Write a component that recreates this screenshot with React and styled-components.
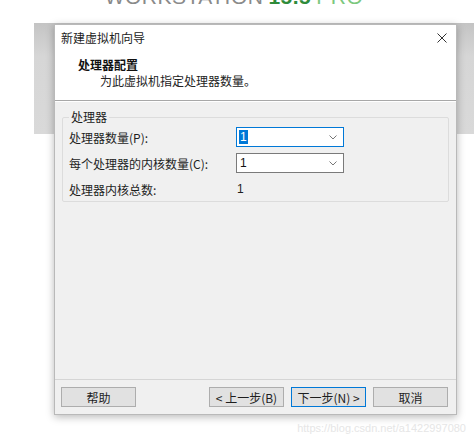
import styled, { createGlobalStyle } from 'styled-components'

const Global = createGlobalStyle`
  html, body { margin: 0; padding: 0; background: #fff; }
  body { font-family: "Noto Sans CJK SC", "Microsoft YaHei", sans-serif; font-size: 12px; color: #1e1e1e; }
`

const Page = styled.div`
  position: relative;
  width: 474px;
  height: 440px;
  overflow: hidden;
  background: #fff;
`

const Banner = styled.div`
  height: 5px;
  overflow: hidden;
  display: flex;
  justify-content: center;
  align-items: flex-end;
  padding-right: 6px;
  font-family: "Liberation Sans", Arial, sans-serif;
  font-size: 21px;
  letter-spacing: 0.5px;
  line-height: 16px;
  color: #8a8a8a;
  white-space: nowrap;
`

const Brand = styled.span`
  color: ${p => p.$c};
  font-weight: ${p => (p.$bold ? 700 : 400)};
  margin-left: ${p => p.$gap || 0}px;
`

const Backdrop = styled.div`
  position: absolute;
  left: 34px;
  top: 23px;
  right: 0;
  height: 111px;
  background: linear-gradient(#c4c4c4, #d6d6d6 30%, #d9d9d9);
`

const Dialog = styled.div`
  position: relative;
  margin: 19px 0 0 54px;
  width: 403px;
  height: 391px;
  display: flex;
  flex-direction: column;
  background: #f0f0f0;
  border: 1px solid #b9b9b9;
  box-sizing: border-box;
  box-shadow: 0 2px 8px rgba(0, 0, 0, 0.28);
`

const TitleBar = styled.div`
  height: 25px;
  display: flex;
  align-items: center;
  justify-content: space-between;
  padding: 0 9px 0 6px;
  background: #fff;
`

const Title = styled.span`
  font-size: 12px;
  color: #222;
`

const Header = styled.div`
  height: 51px;
  background: #fff;
  padding: 7px 0 0 23px;
  box-sizing: border-box;
  border-bottom: 1px solid #a8a8a8;
`

const HeadTitle = styled.div`
  font-weight: 700;
  font-size: 12px;
  line-height: 16px;
  color: #111;
`

const HeadSub = styled.div`
  font-size: 12px;
  line-height: 16px;
  padding-left: 22px;
  color: #222;
`

const Body = styled.div`
  flex: 1;
  padding: 8px 7px 0 7px;
  border-top: 1px solid #fff;
`

const Group = styled.fieldset`
  margin: 0;
  padding: 0 0 6px 6px;
  height: 92px;
  box-sizing: border-box;
  border: 1px solid #dcdcdc;
  border-radius: 2px;
`

const Legend = styled.legend`
  padding: 0 2px;
  margin-left: 0;
  font-size: 12px;
  line-height: 14px;
  color: #222;
`

const Rows = styled.div`
  display: grid;
  grid-template-columns: 167px 108px;
  grid-auto-rows: 26px;
  align-items: center;
  margin-top: 0;
`

const Label = styled.span`
  font-size: 12px;
  color: #1e1e1e;
`

const Combo = styled.div`
  height: 20px;
  box-sizing: border-box;
  display: flex;
  align-items: center;
  justify-content: space-between;
  padding: 0 6px 0 2px;
  background: #fff;
  border: 1px solid ${p => (p.$focus ? '#0078d7' : '#7a7a7a')};
`

const Value = styled.span`
  font-family: "Liberation Sans", Arial, sans-serif;
  font-size: 12px;
  line-height: 14px;
  padding: 0 1px;
  color: ${p => (p.$sel ? '#fff' : '#111')};
  background: ${p => (p.$sel ? '#0078d7' : 'transparent')};
`

const Plain = styled.span`
  font-family: "Liberation Sans", Arial, sans-serif;
  font-size: 12px;
  padding-left: 1px;
`

const Footer = styled.div`
  height: 34px;
  border-top: 1px solid #d5d5d5;
  display: flex;
  align-items: center;
  padding: 0 8px 0 6px;
  gap: 7px;
`

const Button = styled.button`
  width: 76px;
  height: 20px;
  padding: 0;
  margin-right: ${p => p.$push || 0}px;
  background: #e1e1e1;
  border: 1px solid ${p => (p.$def ? '#0078d7' : '#adadad')};
  box-shadow: ${p => (p.$def ? 'inset 0 0 0 1px #e1e1e1' : 'none')};
  font-family: "Noto Sans CJK SC", sans-serif;
  font-size: 12px;
  color: #1e1e1e;
`

const Watermark = styled.div`
  position: absolute;
  right: 8px;
  bottom: 6px;
  font-family: "Liberation Sans", Arial, sans-serif;
  font-size: 11px;
  color: #e6e6e6;
`

function Chevron() {
  return (
    <svg width="8" height="5" viewBox="0 0 8 5">
      <path d="M0.5 0.5 L4 4 L7.5 0.5" fill="none" stroke="#777" strokeWidth="1" />
    </svg>
  )
}

function Close() {
  return (
    <svg width="10" height="10" viewBox="0 0 10 10">
      <path d="M0.5 0.5 L9.5 9.5 M9.5 0.5 L0.5 9.5" stroke="#333" strokeWidth="1" />
    </svg>
  )
}

export default function App() {
  return (
    <Page>
      <Global />
      <Banner>
        <Brand $c="#8a8a8a">WORKSTATION</Brand>
        <Brand $c="#2e8b3a" $bold $gap={5}>15.5</Brand>
        <Brand $c="#7bc87e" $gap={5}>PRO</Brand>
      </Banner>
      <Backdrop />
      <Dialog>
        <TitleBar>
          <Title>新建虚拟机向导</Title>
          <Close />
        </TitleBar>
        <Header>
          <HeadTitle>处理器配置</HeadTitle>
          <HeadSub>为此虚拟机指定处理器数量。</HeadSub>
        </Header>
        <Body>
          <Group>
            <Legend>处理器</Legend>
            <Rows>
              <Label>处理器数量(P):</Label>
              <Combo $focus>
                <Value $sel>1</Value>
                <Chevron />
              </Combo>
              <Label>每个处理器的内核数量(C):</Label>
              <Combo>
                <Value>1</Value>
                <Chevron />
              </Combo>
              <Label>处理器内核总数:</Label>
              <Plain>1</Plain>
            </Rows>
          </Group>
        </Body>
        <Footer>
          <Button $push={66}>帮助</Button>
          <Button>&lt; 上一步(B)</Button>
          <Button $def>下一步(N) &gt;</Button>
          <Button>取消</Button>
        </Footer>
      </Dialog>
      <Watermark>https://blog.csdn.net/a1422997080</Watermark>
    </Page>
  )
}
